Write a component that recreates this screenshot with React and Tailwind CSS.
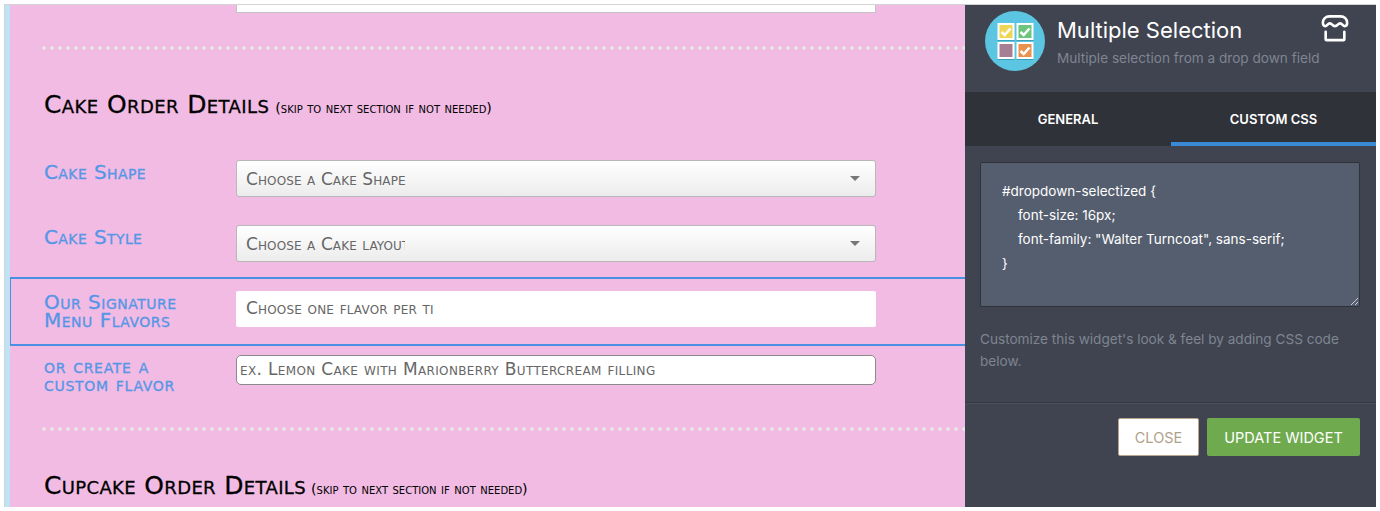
import React from 'react';

const cakeFont = "font-['DejaVu_Sans',sans-serif] [font-variant:small-caps]";

function Divider({ className }) {
  return (
    <div className={`ml-[30px] h-[4px] bg-[radial-gradient(circle,#e8e4e4_1.8px,transparent_2px)] bg-[length:8px_4px] ${className}`} />
  );
}

function SelectBox({ text, clip }) {
  return (
    <div className="flex h-[37px] w-[640px] items-center justify-between rounded-[3px] border border-[#b8b8b8] bg-gradient-to-b from-white to-[#ececec] pl-[9px] pr-[15px]">
      <span className={`${cakeFont} ${clip} overflow-hidden whitespace-nowrap pt-[1px] text-[17px] leading-[24px] tracking-[0.1px] text-[#666]`}>{text}</span>
      <span className="h-0 w-0 border-x-[5px] border-t-[5px] border-x-transparent border-t-[#777]" />
    </div>
  );
}

function Row({ label, text, clip }) {
  return (
    <div className="flex items-start">
      <div className={`${cakeFont} ml-[34px] w-[192px] text-[20px] leading-[24px] tracking-[0.4px] text-[#5596e6] [-webkit-text-stroke:0.3px_#5596e6]`}>{label}</div>
      <SelectBox text={text} clip={clip} />
    </div>
  );
}

function WidgetIcon() {
  const tiles = [
    { color: '#eed757', check: true },
    { color: '#6cc57c', check: true },
    { color: '#a77f94', check: false },
    { color: '#e9924f', check: true },
  ];
  return (
    <svg viewBox="0 0 60 60" className="h-[60px] w-[60px] shrink-0">
      <circle cx="30" cy="30" r="30" fill="#5cc5e2" />
      {tiles.map((t, i) => {
        const x = i % 2 === 0 ? 12.5 : 31.5;
        const y = i < 2 ? 12 : 31;
        return (
          <g key={i}>
            <rect x={x} y={y} width="17" height="17" fill="#fff" />
            <rect x={x} y={y + 17} width="17" height="1" fill="#3f9fb8" />
            <rect x={x + 2} y={y + 2} width="13" height="13" fill={t.color} />
            {t.check && <path d={`M${x + 4} ${y + 9}l3.2 3 5.8-6.500`} fill="none" stroke="#fff" strokeWidth="2.6" />}
          </g>
        );
      })}
    </svg>
  );
}

function StoreIcon() {
  return (
    <svg viewBox="0 0 30 30" className="h-[28px] w-[28px]" fill="none" stroke="#fff" strokeWidth="2.8" strokeLinejoin="round" strokeLinecap="round">
      <path d="M9 2.500h12c4 0 7 3 7 7 0 2-1 3.500-2.500 3.500-2.200 0-2.500-3-5-3s-2.500 3-5.500 3-3-3-5.500-3-2.800 3-5 3c-1.500 0-2.500-1.500-2.500-3.500 0-4 3-7 7-7z" />
      <path d="M5 19v8c0 .5.5 1 1 1h18c.5 0 1-.5 1-1v-8" />
    </svg>
  );
}

export default function App() {
  return (
    <div className="h-[511px] w-[1380px] overflow-hidden bg-white pb-[4px] pl-[4px] pr-[4px] pt-[4px] font-['Inter',sans-serif]">
      <div className="flex h-full border-l border-t border-[#d4d4d4]">
        {/* Form preview */}
        <div className="h-full flex-1 overflow-hidden border-l-[5px] border-[#bfe3f5] bg-[#f1bbe3]">
          <div className="ml-[226px] h-[8px] w-[640px] border border-t-0 border-[#c4c4c4] bg-white" />
          <Divider className="mt-[33px]" />
          <div className="ml-[34px] mt-[40px] flex items-baseline text-black">
            <span className={`${cakeFont} text-[25px] leading-[30px] tracking-[0.4px] [-webkit-text-stroke:0.3px_#000]`}>Cake Order Details</span>
            <span className={`${cakeFont} ml-[6px] text-[14.2px]`}>(skip to next section if not needed)</span>
          </div>
          <div className="mt-[40px]">
            <Row label="Cake Shape" text="Choose a Cake Shape" />
          </div>
          <div className="mt-[28px]">
            <Row label="Cake Style" text="Choose a Cake layout" clip="w-[159px]" />
          </div>
          <div className="-ml-px mt-[15px] flex h-[69px] items-center border-2 border-r-0 border-[#4a90e2]">
            <div className={`${cakeFont} mb-[2px] ml-[33px] w-[192px] text-[20px] leading-[18px] tracking-[0.5px] text-[#5596e6] [-webkit-text-stroke:0.3px_#5596e6]`}>Our Signature<br />Menu Flavors</div>
            <div className={`${cakeFont} mb-[6px] flex h-[36px] w-[640px] items-center rounded-[2px] bg-white pl-[10px] text-[17px] tracking-[0.17px] text-[#666]`}>Choose one flavor per ti</div>
          </div>
          <div className="mt-[9px] flex items-start">
            <div className={`${cakeFont} ml-[34px] w-[192px] pt-[2px] text-[20px] leading-[18px] tracking-[0.7px] text-[#5596e6] [-webkit-text-stroke:0.3px_#5596e6]`}>or create a<br />custom flavor</div>
            <div className={`${cakeFont} flex h-[30px] w-[640px] items-center rounded-[5px] border border-[#8a8a8a] bg-white pl-[3px] text-[17px] tracking-[0.35px] text-[#666]`}>ex. Lemon Cake with Marionberry Buttercream filling</div>
          </div>
          <Divider className="mt-[34px]" />
          <div className="ml-[34px] mt-[40px] flex items-baseline whitespace-nowrap text-black">
            <span className={`${cakeFont} text-[25px] leading-[30px] tracking-[0.35px] [-webkit-text-stroke:0.3px_#000]`}>Cupcake Order Details</span>
            <span className={`${cakeFont} ml-[5px] text-[14.2px]`}>(skip to next section if not needed)</span>
          </div>
        </div>

        {/* Widget settings panel */}
        <div className="flex h-full w-[411px] shrink-0 flex-col bg-[#3f4450]">
          <div className="relative flex h-[87px] shrink-0 items-start pl-[20px] pt-[6px]">
            <WidgetIcon />
            <div className="ml-[12px] pt-[5px]">
              <div className="text-[22px] leading-[28px] text-white">Multiple Selection</div>
              <div className="mt-[4px] text-[13.6px] leading-[20px] text-[#7f8591]">Multiple selection from a drop down field</div>
            </div>
            <div className="absolute right-[27px] top-[9px]"><StoreIcon /></div>
          </div>
          <div className="flex h-[54px] shrink-0 bg-[#2f3239] text-[13px] font-semibold text-white">
            <div className="flex w-[206px] items-center justify-center pt-[1px]">GENERAL</div>
            <div className="flex flex-1 items-center justify-center border-b-4 border-[#3a8ad6] pt-[5px]">CUSTOM CSS</div>
          </div>
          <div className="h-[257px] shrink-0 border-b border-[#333740] pl-[15px] pr-[16px] pt-[16px]">
            <div className="relative h-[145px] rounded-[2px] border border-[#2f3239] bg-[#555e6e] pl-[21px] pt-[16px] text-[13.5px] leading-[24px] text-white">
              <div>#dropdown-selectized {'{'}</div>
              <div className="pl-[16px]">font-size: 16px;</div>
              <div className="pl-[16px]">font-family: "Walter Turncoat", sans-serif;</div>
              <div>{'}'}</div>
              <svg viewBox="0 0 8 8" className="absolute bottom-[1px] right-[1px] h-[8px] w-[8px]" stroke="#c8ccd4" strokeWidth="1">
                <path d="M1 8l7-7M5 8l3-3" />
              </svg>
            </div>
            <div className="mt-[21px] text-[13.6px] leading-[22px] text-[#7f8591]">Customize this widget's look &amp; feel by adding CSS code below.</div>
          </div>
          <div className="flex flex-1 justify-end gap-[8px] border-t border-[#4a505c] pr-[16px] pt-[14px]">
            <button className="h-[38px] w-[81px] rounded-[2px] border border-[#b7a58c] bg-white pt-[1px] text-[14.5px] text-[#b09f8a]">CLOSE</button>
            <button className="h-[38px] w-[153px] rounded-[2px] bg-[#6faa4f] pt-[1px] text-[14.5px] text-white">UPDATE WIDGET</button>
          </div>
        </div>
      </div>
    </div>
  );
}
